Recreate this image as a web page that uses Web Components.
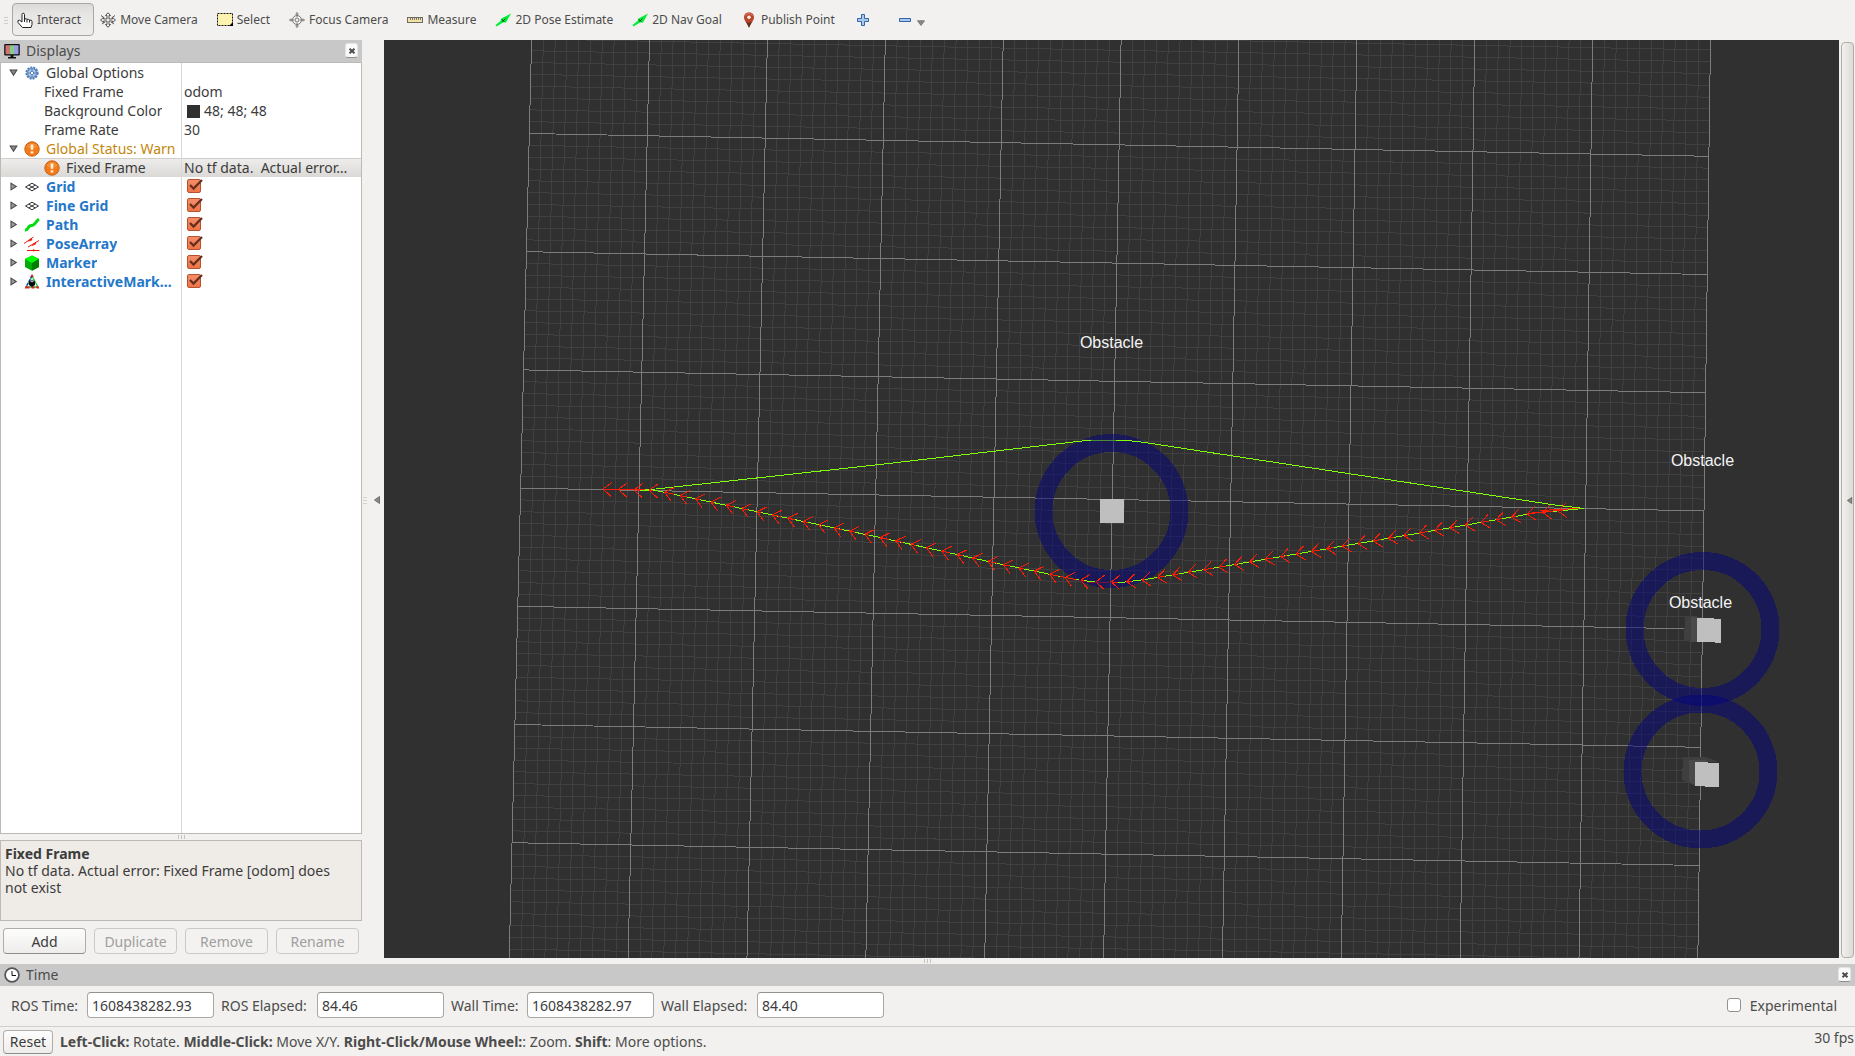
<!DOCTYPE html>
<html lang="en">
<head>
<meta charset="utf-8">
<title>RViz</title>
<style>
html,body{margin:0;height:100%}
body{background:#f2f1ef;color:#4c4c4c;font-family:"Noto Sans","Open Sans",sans-serif;font-size:14px;line-height:17px;overflow:hidden}
</style>
</head>
<body>
<rviz-app></rviz-app>

<script>
const ICONS = {
  hand:'<path d="M5.500 15.500 1 10.500V8.500l1.500-.3L5 10V2.500q0-1.300 1.200-1.300t1.300 1.300V7q2-.9 2.500.5 2-.8 2.500.7 2.500-.6 2.500 1.300v3l-1 3z" fill="#fff" stroke="#222"/><path d="M7.500 7v3M10 7.500v3M12.500 8v2.500" stroke="#222"/>',
  move:'<g fill="#f2f1ef" stroke="#555"><path d="M8 .8 10.500 3.500H9V7h3.500V5.500L15.500 8l-3 2.500V9H9v3.500h1.500L8 15.300 5.500 12.500H7V9H3.500v1.500L.5 8l3-2.500V7H7V3.500H5.500z"/><path d="M1 3.500l3.500 2.500M15 3.500l-3.500 2.500M2 12l3-2M14 12l-3-2" stroke="#555"/></g>',
  select:'<rect x=".5" y="1.500" width="15" height="12" fill="#fdf3b0" stroke="#111" stroke-dasharray="2 1"/><path d="M16 10v4h-4z" fill="#000"/>',
  focus:'<g fill="none" stroke="#777"><circle cx="8" cy="8" r="4.500"/><circle cx="8" cy="8" r="2"/><path d="M8 0v5M8 11v5M0 8h5M11 8h5M6.500 2h3M6.500 14h3M2 6.500v3M14 6.500v3"/></g>',
  ruler:'<rect x=".5" y="5.500" width="15" height="5" fill="#f3e3a4" stroke="#6d6a66"/><path d="M3.500 6v2M5.500 6v2M7.500 6v2M9.500 6v2M11.500 6v2M13.500 6v2" stroke="#777"/>',
  arrow:'<path d="M.5 13 5.500 9 6.500 6.500 16 1.500 11 10.500 8 10.500 1.500 14.500z" fill="#00f038"/><path d="M6.500 7.500l3 2M7.500 9.500l3-3" stroke="#064a14"/>',
  pin:'<path d="M8 .3q5 .4 5 5.200c0 3-3 5-5 10.200C6 10.500 3 8.500 3 5.500Q3 .7 8 .3z" fill="#b8452c"/><path d="M4.500 9.500Q8 12 11.500 9.500 9.500 12 8 15.700 6.500 12 4.500 9.500z" fill="#5c3218"/><path d="M4.500 4Q5 1.500 8 1.500T11.500 4" fill="none" stroke="#e2765c"/><circle cx="8" cy="5.300" r="1.800" fill="#f7efe6"/>',
  plus:'<path d="M6.500 2.500h3v4h4v3h-4v4h-3v-4h-4v-3h4z" fill="#a9c8ee" stroke="#3565a4"/>',
  minus:'<path d="M2.500 6.500h11v3h-11z" fill="#a9c8ee" stroke="#3565a4"/>',
  screen:'<rect x=".2" y="1" width="15.600" height="11.500" rx="1" fill="#111"/><path d="M1.500 2.200H6v9H1.500z" fill="#cf7474"/><path d="M6 2.200h4v9H6z" fill="#83cf84"/><path d="M10 2.200h4.500v9H10z" fill="#9b9be6"/><path d="M6.500 12h3v2H12v1.500H4V14h2.500z" fill="#111"/>',
  clock:'<circle cx="8" cy="8" r="6.900" fill="#fff" stroke="#555" stroke-width="1.700"/><path d="M8 4v4.500h4" fill="none" stroke="#111"/>',
  gear:'<circle cx="8" cy="8" r="5.600" fill="#a5c0e2" stroke="#4f7db8" stroke-width="2" stroke-dasharray="2 1"/><circle cx="8" cy="8" r="4.300" fill="#b5cdea" stroke="#5885bd"/><circle cx="8" cy="8" r="1.700" fill="#fff" stroke="#5885bd"/><path d="M8 4v2M8 10v2M4 8h2M10 8h2" stroke="#5885bd"/>',
  warn:'<circle cx="8" cy="8" r="7.200" fill="#f27a1a" stroke="#c9600b"/><path d="M2.500 6Q4 2.200 8 2.200T13.500 6q-5 3-11 0z" fill="#f89a48" opacity=".6"/><path d="M6.700 3.500h2.600v5.300H6.700zM6.700 10.300h2.600v2.200H6.700z" fill="#fff0dc"/>',
  grid:'<path d="M1.500 8 8 4.200 14.500 8 8 11.800zM4.700 6.100l6.500 3.800M11.300 6.100 4.700 9.900" fill="none" stroke="#333"/>',
  path:'<path d="M1 13C4.500 13.500 3.500 8.500 7.500 8.500S11 4.500 15 2.300" fill="none" stroke="#0d1" stroke-width="3"/>',
  poses:'<g stroke="#f01808" fill="#f01808"><path d="M0 7.500 9.500 1M4 11 15 4.500M3 14.500h12.500"/><path d="M4 6l3-4 1.500 2zM7 10.500l4-4 1.500 1.500zM9 13l3 1.500-3 1z" stroke="none"/></g>',
  cube:'<path d="M8 .5 15 4v8l-7 3.700L1 12V4z" fill="#00ad08"/><path d="M8 .5 15 4 8 8 1 4z" fill="#00fd08"/><path d="M8 8l7-4v8l-7 3.700z" fill="#007f04"/>',
  imark:'<path d="M8 2 14 13H2z" fill="none" stroke="#22c040" stroke-width="1.300"/><path d="M8 2 2 13" stroke="#2030e0" stroke-width="1.500" stroke-dasharray="2.500 1.500"/><path d="M2.500 13.500h11" stroke="#e02020" stroke-width="2" stroke-dasharray="3 2"/><path d="M8 0l1.800 3H6.200zM.7 14.700 2 11.500l2 2.300zM15.300 14.700 14 11.500l-2 2.300z" fill="#e01c1c"/><path d="M8 5.500 11 7.500v3.500L8 13 5 11V7.500z" fill="#050505"/><path d="M8 6l2 1.300L8 8.500 6 7.300z" fill="#aaa"/>',
  close:'<path d="M3 3.500l10 9M13 3.500l-10 9" stroke="#4c4c4c" stroke-width="4"/>',
  open:'<path d="M2 3.500h12L8 13z" fill="#8a8a8a" stroke="#444" stroke-width="1.800"/>',
  shut:'<path d="M3.500 2v12L13 8z" fill="#9a9a9a" stroke="#444" stroke-width="1.800"/>',
  left:'<path d="M13 1v14L3 8z" fill="#8a8a8a" stroke="#555" stroke-width="1.500"/>',
  down:'<path d="M1 3.500h14L8 13z" fill="#8a8a8a" stroke="#666" stroke-width="1.500"/>'
};
function define(name, markup, setup) {
  const template = document.createElement('template');
  template.innerHTML = markup;
  customElements.define(name, class extends HTMLElement {
    constructor() {
      super();
      this.attachShadow({mode:'open'}).append(template.content.cloneNode(true));
    }
    connectedCallback() { if (setup) setup(this, this.shadowRoot); }
  });
}

define('rv-icon', `<style>:host{display:block;flex:none;width:var(--size,16px);height:var(--size,16px)}svg{display:block;width:100%;height:100%}</style><svg viewBox="0 0 16 16" fill="none" aria-hidden="true"></svg>`,
  (el, root) => { root.querySelector('svg').innerHTML = ICONS[el.getAttribute('name')]; });

define('tool-button', `<style>
:host{display:block}
button{display:flex;align-items:center;gap:4px;height:33px;padding:0 12px 0 4px;border:1px solid transparent;border-radius:4px;background:none;color:#4c4c4c;font:12px/16px "Noto Sans","Open Sans",sans-serif;white-space:nowrap}
:host([active]) button{border-color:#aaa7a2;background:linear-gradient(#dcdad8,#e6e5e3 30%,#efeeed)}
:host([bare]) button{padding:0 5px;gap:4px}
</style><button type="button"><slot></slot></button>`,
  (el, root) => {
    const b = root.querySelector('button');
    if (el.hasAttribute('label')) b.setAttribute('aria-label', el.getAttribute('label'));
    if (el.hasAttribute('active')) b.setAttribute('aria-pressed', 'true');
  });

define('tool-bar', `<style>
:host{display:flex;align-items:center;height:40px;gap:1px;padding-left:4px;box-sizing:border-box}
.grip{width:4px;height:8px;margin:1px 3px 0 0;background:repeating-linear-gradient(#cfcdca 0 1px,transparent 1px 3px)}
tool-button{margin-bottom:1px}
.del{margin-left:13px}
.del .menu{--size:8px;margin-top:6px}
</style>
<span class="grip"></span>
<tool-button active><rv-icon name="hand"></rv-icon>Interact</tool-button>
<tool-button><rv-icon name="move"></rv-icon>Move Camera</tool-button>
<tool-button><rv-icon name="select"></rv-icon>Select</tool-button>
<tool-button><rv-icon name="focus"></rv-icon>Focus Camera</tool-button>
<tool-button><rv-icon name="ruler"></rv-icon>Measure</tool-button>
<tool-button><rv-icon name="arrow"></rv-icon>2D Pose Estimate</tool-button>
<tool-button><rv-icon name="arrow"></rv-icon>2D Nav Goal</tool-button>
<tool-button><rv-icon name="pin"></rv-icon>Publish Point</tool-button>
<tool-button bare label="Add tool"><rv-icon name="plus"></rv-icon></tool-button>
<tool-button bare class="del" label="Remove tool"><rv-icon name="minus"></rv-icon><rv-icon class="menu" name="down"></rv-icon></tool-button>`);

define('dock-title', `<style>
:host{display:flex;align-items:center;gap:6px;height:22px;padding:0 4px 1px 4px;box-sizing:border-box;background:#c8c8c8;flex:none}
span{flex:1}
button{display:flex;align-items:center;justify-content:center;width:13px;height:15px;padding:0;border:1px solid #e4e4e4;border-bottom-color:#8e8e8e;border-radius:3px;background:#fafafa;--size:8px}
</style><rv-icon></rv-icon><span><slot></slot></span><button type="button" aria-label="Close"><rv-icon name="close"></rv-icon></button>`,
  (el, root) => { const i = root.querySelector('rv-icon'); i.setAttribute('name', el.getAttribute('icon')); i.shadowRoot.querySelector('svg').innerHTML = ICONS[el.getAttribute('icon')]; });

define('tree-row', `<style>
:host{display:grid;grid-template-columns:181px 1fr;height:19px;color:#3c3c3c;white-space:nowrap}
.name{display:flex;align-items:center;gap:6px;padding-left:8px;box-sizing:border-box;border-right:1px solid #d8d8d8;min-width:0}
.name>span:last-child{overflow:hidden;text-overflow:ellipsis}
.mark{display:block;width:9px;--size:9px}
:host([kind=display]) .name{color:#2477c9;font-weight:bold;padding-right:6px}
:host([kind=warn]) .name{color:#c4860a}
:host([kind=field]) .name{padding-left:43px}
:host([kind=status]) .name{padding-left:43px}
:host([kind=field]) .mark,:host([kind=status]) .mark{display:none}
:host([kind=status]){background:linear-gradient(#efeeed,#dbd9d6);box-shadow:inset 0 1px #d0ceca}
.value{display:flex;align-items:center;padding:0 6px 0 2px;min-width:0}
.value ::slotted(*){overflow:hidden;text-overflow:ellipsis}
</style>
<div class="name"><span class="mark"></span><slot name="icon"></slot><span><slot></slot></span></div><div class="value"><slot name="value"></slot></div>`,
  (el, root) => {
    const m = el.getAttribute('mark');
    if (m) root.querySelector('.mark').innerHTML = '<rv-icon name="' + m + '"></rv-icon>';
  });

define('rv-check', `<style>
:host{display:block}
.wrap{display:grid;margin-left:3px;width:17px;height:17px}
input,svg{grid-area:1/1}
input{appearance:none;margin:1px 0 0;width:14px;height:14px;border:1px solid #b5532f;border-radius:2px;background:linear-gradient(#f58e6a,#ef7348)}
svg{pointer-events:none}
</style><span class="wrap"><input type="checkbox" checked><svg width="17" height="16" viewBox="0 0 17 16"><path d="M3 7 6.500 10.500 15 2" fill="none" stroke="#64301d" stroke-width="2.300"/></svg></span>`,
  (el, root) => root.querySelector('input').setAttribute('aria-label', el.getAttribute('label')));

define('push-button', `<style>
:host{display:block;flex:1}
button{display:block;width:100%;height:var(--h,26px);padding:0;border:1px solid #b0ada8;border-bottom-color:#908d88;border-radius:4px;background:linear-gradient(#fdfdfd,#eeedeb);color:#3c3c3c;font:14px/17px "Noto Sans","Open Sans",sans-serif}
button:disabled{border-color:#ccc9c5;background:#f3f2f1;color:#a09f9d}
</style><button type="button"><slot></slot></button>`,
  (el, root) => { root.querySelector('button').disabled = el.hasAttribute('disabled'); });

define('displays-panel', `<style>
:host{display:flex;flex-direction:column;width:362px;box-sizing:border-box}
.tree{flex:1;display:flex;flex-direction:column;border:1px solid #bdbab5;background:#fff}
.rest{flex:1;width:181px;box-sizing:border-box;border-right:1px solid #d8d8d8}
.split{align-self:center;width:7px;height:4px;margin:1px;background:repeating-linear-gradient(90deg,#c6c4c0 0 1px,transparent 1px 3px)}
.info{height:81px;box-sizing:border-box;padding:4px 16px 4px 4px;border:1px solid #bdbab5;background:#efebe6;color:#3c3c3c}
p{margin:0}
.buttons{display:flex;gap:8px;padding:7px 3px 10px}
.swatch{display:inline-block;width:13px;height:13px;margin:0 4px 0 3px;background:#303030;vertical-align:-2px}
</style>
<dock-title icon="screen">Displays</dock-title>
<div class="tree">
<tree-row mark="open"><rv-icon slot="icon" name="gear"></rv-icon>Global Options</tree-row>
<tree-row kind="field">Fixed Frame<span slot="value">odom</span></tree-row>
<tree-row kind="field">Background Color<span slot="value"><i class="swatch"></i>48; 48; 48</span></tree-row>
<tree-row kind="field">Frame Rate<span slot="value">30</span></tree-row>
<tree-row kind="warn" mark="open"><rv-icon slot="icon" name="warn"></rv-icon>Global Status: Warn</tree-row>
<tree-row kind="status"><rv-icon slot="icon" name="warn"></rv-icon>Fixed Frame<span slot="value">No tf data.&nbsp; Actual error…</span></tree-row>
<tree-row kind="display" mark="shut"><rv-icon slot="icon" name="grid"></rv-icon>Grid<rv-check slot="value" label="Grid"></rv-check></tree-row>
<tree-row kind="display" mark="shut"><rv-icon slot="icon" name="grid"></rv-icon>Fine Grid<rv-check slot="value" label="Fine Grid"></rv-check></tree-row>
<tree-row kind="display" mark="shut"><rv-icon slot="icon" name="path"></rv-icon>Path<rv-check slot="value" label="Path"></rv-check></tree-row>
<tree-row kind="display" mark="shut"><rv-icon slot="icon" name="poses"></rv-icon>PoseArray<rv-check slot="value" label="PoseArray"></rv-check></tree-row>
<tree-row kind="display" mark="shut"><rv-icon slot="icon" name="cube"></rv-icon>Marker<rv-check slot="value" label="Marker"></rv-check></tree-row>
<tree-row kind="display" mark="shut"><rv-icon slot="icon" name="imark"></rv-icon>InteractiveMark…<rv-check slot="value" label="InteractiveMarkers"></rv-check></tree-row>
<div class="rest"></div>
</div>
<div class="split"></div>
<div class="info"><p><b>Fixed Frame</b></p><p>No tf data. Actual error: Fixed Frame [odom] does not exist</p></div>
<div class="buttons"><push-button>Add</push-button><push-button disabled>Duplicate</push-button><push-button disabled>Remove</push-button><push-button disabled>Rename</push-button></div>`);

define('scene-view', `<style>
:host{display:block;background:#303030;min-width:0;min-height:0;overflow:hidden}
svg{display:block;width:100%;height:100%}
.lines{shape-rendering:crispEdges;fill:none}
text{font:16px "Liberation Sans",Arial,sans-serif;fill:#f4f4f4;text-anchor:middle}
</style>
<svg viewBox="384 40 1455 918" preserveAspectRatio="xMidYMid slice">
<g class="lines">
<path class="fine" stroke="#404040"/>
<path class="main" stroke="#7c7c7c"/>
<g fill="none" stroke="#000082" stroke-opacity=".48" stroke-width="18">
<circle cx="1111.500" cy="511" r="68"/><circle cx="1702.500" cy="629" r="68"/><circle cx="1700.500" cy="771.500" r="68"/></g>
<path d="M1685 616h12v26h-6l-7-2z" fill="#3f3f3f"/><path d="M1691 617h6v25h-6z" fill="#4a4a4a"/>
<path d="M1697 618h17v1h7v24h-6v-1h-18z" fill="#bfbfbf"/>
<path d="M1683 757h23l13 5h-24v24l-13-6z" fill="#3f3f3f"/><path d="M1689 760h17v3h-11v22l-6-3z" fill="#4a4a4a"/>
<path d="M1695 762h13v1h11v24h-14v-1h-10z" fill="#bfbfbf"/>
<path d="M1100 499h24v24h-24z" fill="#bfbfbf"/>
<path stroke="#83ff08" d="M638.500 489.500 656 489 880 464.500 1000 450.500 1082 441 1092 440.500h24L1128 440.500 1145 442.500 1220 454 1440 487.500 1555 505 1584 508.500"/>
<path stroke="#4a8a38" d="M1091 440.500h25"/>
<path class="route" stroke="#83ff08"/>
<path class="shafts" stroke="#ff1c06"/>
<path class="heads" stroke="#ff1c06"/>
<path stroke="#7a103c" d="M1078 580.500l12 2h22"/>
</g>
<text x="1111.500" y="348">Obstacle</text><text x="1702.500" y="466">Obstacle</text><text x="1700.500" y="608">Obstacle</text>
</svg>`,
  (el, root) => {
    const put = (sel, d) => root.querySelector(sel).setAttribute('d', d);
    // Ground plane: rows u and columns v in cells, drawn in slight perspective.
    const point = (u, v) => {
      const yl = 133.500 + 118.200 * u, yr = 156.300 + 118.200 * u;
      const xl = 531.600 - (yl - 40) * .0244, xr = 1710.500 - (yr - 40) * .0138;
      return (xl + (xr - xl) * v / 10).toFixed(2) + ' ' + (yl + (yr - yl) * v / 10).toFixed(2);
    };
    let fine = '', main = '';
    for (let i = -12; i <= 72; i++) {
      const seg = 'M' + point(i / 10, 0) + 'L' + point(i / 10, 10);
      if (i % 10) fine += seg; else main += seg;
    }
    for (let j = 0; j <= 100; j++) {
      const seg = 'M' + point(-1.200, j / 10) + 'L' + point(7.200, j / 10);
      if (j % 10) fine += seg; else main += seg;
    }
    put('.fine', fine);
    put('.main', main);

    const route = [[603,489],[656,490.500],[756,511.500],[880,537.500],[1000,564],[1075,579.500],[1095,582],[1125,582],[1145,579.500],[1220,567],[1440,529.500],[1535,513],[1584,508.500]];
    put('.route', 'M638 490L' + route.slice(1).join('L'));
    const at = x => {
      let k = 0;
      while (k < route.length - 2 && route[k + 1][0] < x) k++;
      const [a, b] = [route[k], route[k + 1]];
      const s = (b[1] - a[1]) / (b[0] - a[0]);
      return [a[1] + s * (x - a[0]), Math.atan(s)];
    };
    let heads = '', shafts = 'M603 489H645';
    for (let x = 603, n = 0; x < 1560; x += 15.400, n++) {
      const [y, a] = at(x);
      const tip = x.toFixed(1) + ' ' + y.toFixed(1);
      for (const t of [-.66, .72]) heads += 'M' + tip + 'l' + (11 * Math.cos(a + t)).toFixed(1) + ' ' + (11 * Math.sin(a + t)).toFixed(1);
      const len = 3 + (n * 5) % 7;
      shafts += 'M' + tip + 'l' + len + ' ' + (len * Math.tan(a)).toFixed(1);
    }
    shafts += 'M1540 510.500L1578 508.500M1527 513.500L1568 509.500M1060 576.500L1076 579.500';
    put('.heads', heads);
    put('.shafts', shafts);
  });

define('time-field', `<style>
:host{display:flex;align-items:center}
label{width:76px;white-space:nowrap}
:host([wide]) label{width:96px}
input{width:127px;height:26px;box-sizing:border-box;margin:0;padding:0 4px;border:1px solid #aaa7a2;border-top-color:#95928d;border-radius:4px;background:#fff;color:#3c3c3c;font:14px/17px "Noto Sans","Open Sans",sans-serif}
</style><label for="v"></label><input id="v" type="text">`,
  (el, root) => { root.querySelector('label').textContent = el.getAttribute('label'); root.querySelector('input').value = el.getAttribute('value'); });

define('time-panel', `<style>
:host{display:block;border-bottom:1px solid #d2d0cd}
.row{display:flex;align-items:center;gap:7px;height:38px;padding:0 18px 2px 11px}
.exp{margin-left:auto;display:flex;align-items:center;gap:9px}
.exp input{appearance:none;width:14px;height:14px;margin:0;border:1px solid #95928d;border-radius:3px;background:#fff}
</style>
<dock-title icon="clock">Time</dock-title>
<div class="row">
<time-field label="ROS Time:" value="1608438282.93"></time-field>
<time-field wide label="ROS Elapsed:" value="84.46"></time-field>
<time-field label="Wall Time:" value="1608438282.97"></time-field>
<time-field wide label="Wall Elapsed:" value="84.40"></time-field>
<label class="exp"><input type="checkbox">Experimental</label>
</div>`);

define('status-bar', `<style>
:host{display:flex;align-items:center;gap:7px;height:29px;padding:0 1px 0 3px;box-sizing:border-box}
push-button{flex:none;width:50px;--h:24px}
.hint{flex:1}
.fps{align-self:flex-start;margin-top:2px}
</style><push-button>Reset</push-button><span class="hint"><b>Left-Click:</b> Rotate. <b>Middle-Click:</b> Move X/Y. <b>Right-Click/Mouse Wheel:</b>: Zoom. <b>Shift</b>: More options.</span><span class="fps">30 fps</span>`);

define('rviz-app', `<style>
:host{display:flex;flex-direction:column;height:100vh}
.work{flex:1;display:flex;min-height:0}
.center{flex:1;display:flex;min-width:0}
scene-view{flex:1;margin-bottom:6px}
.handle{flex:none;display:flex;align-items:center;justify-content:center;width:22px;padding-bottom:4px;--size:8px}
.dots{width:4px;height:7px;background:repeating-linear-gradient(#d5d3d0 0 1px,transparent 1px 3px)}
.handle rv-icon{margin:0 2px 0 6px}
.rail{flex:none;display:flex;align-items:center;justify-content:flex-end;width:13px;box-sizing:border-box;margin:2px 1px 6px 2px;border:1px solid #b0ada8;border-radius:4px;background:linear-gradient(90deg,#f2f1ef,#dddbd8);--size:7px}
.split{flex:none;align-self:center;width:7px;height:4px;margin:-5px 0 1px;background:repeating-linear-gradient(90deg,#c6c4c0 0 1px,transparent 1px 3px)}
</style>
<tool-bar></tool-bar>
<div class="work">
<displays-panel></displays-panel>
<div class="center"><div class="handle"><span class="dots"></span><rv-icon name="left"></rv-icon></div><scene-view></scene-view><div class="rail"><rv-icon name="left"></rv-icon></div></div>
</div>
<div class="split"></div>
<time-panel></time-panel>
<status-bar></status-bar>`);
</script>
</body>
</html>
